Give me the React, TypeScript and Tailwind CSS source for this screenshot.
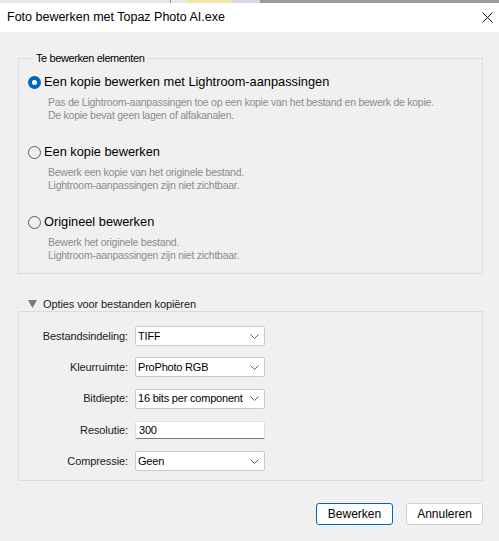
import React, { useState } from 'react';

const font = { fontFamily: '"Liberation Sans", Arial, sans-serif' };

function Chevron() {
  return (
    <svg width="9" height="5" viewBox="0 0 9 5" className="shrink-0">
      <path d="M0.5 0.5 L4.5 4.5 L8.5 0.5" fill="none" stroke="#606060" strokeWidth="1" />
    </svg>
  );
}

function Radio({ checked }: { checked: boolean }) {
  return checked ? (
    <span className="w-[13px] h-[13px] rounded-full bg-[#0067c0] flex items-center justify-center shrink-0">
      <span className="w-[5px] h-[5px] rounded-full bg-white" />
    </span>
  ) : (
    <span className="w-[13px] h-[13px] rounded-full border border-[#5c5c5c] shrink-0" />
  );
}

type Option = { id: string; label: string; lines: string[] };

const options: Option[] = [
  {
    id: 'copy-lr',
    label: 'Een kopie bewerken met Lightroom-aanpassingen',
    lines: [
      'Pas de Lightroom-aanpassingen toe op een kopie van het bestand en bewerk de kopie.',
      'De kopie bevat geen lagen of alfakanalen.',
    ],
  },
  {
    id: 'copy',
    label: 'Een kopie bewerken',
    lines: ['Bewerk een kopie van het originele bestand.', 'Lightroom-aanpassingen zijn niet zichtbaar.'],
  },
  {
    id: 'original',
    label: 'Origineel bewerken',
    lines: ['Bewerk het originele bestand.', 'Lightroom-aanpassingen zijn niet zichtbaar.'],
  },
];

function SelectBox({ value }: { value: string }) {
  return (
    <div className="w-[130px] h-[20px] bg-white border border-[#cccccc] rounded-[2px] flex items-center justify-between pl-[2px] pr-[5px] text-[11px] tracking-[-0.2px] text-black">
      <span className="whitespace-nowrap overflow-hidden">{value}</span>
      <Chevron />
    </div>
  );
}

function Row({ label, children }: { label: string; children: React.ReactNode }) {
  return (
    <div className="flex items-center h-[20px]">
      <div className="w-[116px] text-right text-[11px] tracking-[-0.1px] text-[#1a1a1a] pr-[7px]">{label}</div>
      {children}
    </div>
  );
}

export default function App() {
  const [mode, setMode] = useState('copy-lr');

  return (
    <div className="w-[499px] h-[541px] bg-[#f0f0f0] flex flex-col overflow-hidden" style={font}>
      {/* strip of the window behind */}
      <div className="h-[3px] flex shrink-0">
        <div className="w-[170px] bg-[#e6e6e6]" />
        <div className="w-[1px] bg-[#8a8a8a]" />
        <div className="w-[16px] bg-[#e9e9e9]" />
        <div className="w-[45px] bg-[#efe6a8]" />
        <div className="w-[28px] bg-[#d9d6e6]" />
        <div className="flex-1 bg-[#9a9a9a]" />
      </div>

      {/* title bar */}
      <div className="h-[29px] bg-white flex items-center justify-between pl-[7px] pr-[6px] shrink-0">
        <span className="text-[12.5px] text-black">Foto bewerken met Topaz Photo AI.exe</span>
        <svg width="11" height="11" viewBox="0 0 11 11">
          <path d="M0.5 0.5 L10.5 10.5 M10.5 0.5 L0.5 10.5" stroke="#1a1a1a" strokeWidth="1" />
        </svg>
      </div>

      <div className="flex flex-col px-[18px] pt-[19px] pr-[16px]">
        <fieldset className="border border-[#dcdcdc] px-[9px] pb-[11px]">
          <legend className="ml-[5px] px-[3px] text-[11px] tracking-[-0.4px] leading-[14px] text-black">
            Te bewerken elementen
          </legend>
          <div className="flex flex-col pt-[8px]">
            {options.map((o, i) => (
              <div key={o.id} className={`flex flex-col ${i < options.length - 1 ? 'mb-[21px]' : ''}`}>
                <label className="flex items-center h-[18px] gap-[3px] cursor-default" onClick={() => setMode(o.id)}>
                  <Radio checked={mode === o.id} />
                  <span className="text-[12.8px] text-black">{o.label}</span>
                </label>
                <div className="pl-[20px] mt-[5px] flex flex-col text-[10.5px] tracking-[-0.25px] leading-[13px] text-[#8c8c8c]">
                  {o.lines.map((l) => (
                    <span key={l} className="whitespace-nowrap">{l}</span>
                  ))}
                </div>
              </div>
            ))}
          </div>
        </fieldset>

        <div className="flex items-center mt-[23px] h-[14px] pl-[10px] gap-[6px]">
          <svg width="9" height="8" viewBox="0 0 9 8">
            <path d="M0 0 L9 0 L4.5 8 Z" fill="#7a7a7a" />
          </svg>
          <span className="text-[11px] tracking-[-0.1px] text-[#1a1a1a]">Opties voor bestanden kopiëren</span>
        </div>

        <div className="border border-[#dcdcdc] h-[170px] flex flex-col gap-[11.3px] pt-[14px]">
          <Row label="Bestandsindeling:">
            <SelectBox value="TIFF" />
          </Row>
          <Row label="Kleurruimte:">
            <SelectBox value="ProPhoto RGB" />
          </Row>
          <Row label="Bitdiepte:">
            <SelectBox value="16 bits per component" />
          </Row>
          <Row label="Resolutie:">
            <div className="w-[130px] h-[18px] bg-white border border-[#e0e0e0] border-b-[#7a7a7a] rounded-[2px] flex items-center pl-[3px] text-[11px] tracking-[-0.2px] text-black">
              300
            </div>
          </Row>
          <Row label="Compressie:">
            <SelectBox value="Geen" />
          </Row>
        </div>

        <div className="flex justify-end gap-[13px] mt-[22px]">
          <button className="w-[77px] h-[22px] bg-white border border-[#0067c0] rounded-[3px] text-[12px] text-black">
            Bewerken
          </button>
          <button className="w-[77px] h-[22px] bg-white border border-[#d0d0d0] rounded-[3px] text-[12px] text-black">
            Annuleren
          </button>
        </div>
      </div>
    </div>
  );
}
